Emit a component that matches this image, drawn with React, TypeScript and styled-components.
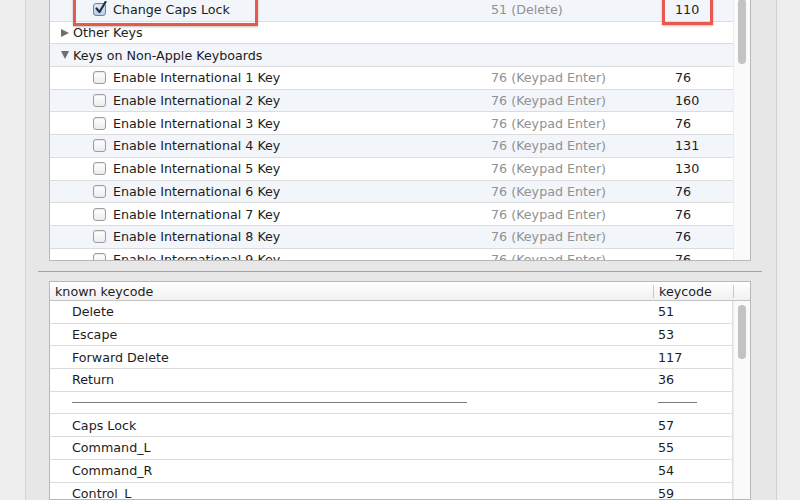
import React from 'react'
import styled, { createGlobalStyle } from 'styled-components'

const GlobalStyle = createGlobalStyle`
  html, body {
    margin: 0;
    padding: 0;
    background: #ececec;
  }
  body {
    font-family: "DejaVu Sans", "Liberation Sans", sans-serif;
    font-size: 12.7px;
    color: #1c1c1c;
  }
`

const ROW_H = 22.7

const Page = styled.div`
  width: 800px;
  height: 500px;
  overflow: hidden;
  display: flex;
  background: #ececec;
`

const Gutter = styled.div<{ side: 'left' | 'right' }>`
  flex: 0 0 ${({ side }) => (side === 'left' ? '25px' : '23px')};
  background: #eeeeee;
  ${({ side }) => (side === 'left' ? 'border-right' : 'border-left')}: 1px solid #d2d2d2;
`

const Main = styled.div`
  flex: 1;
  display: flex;
  flex-direction: column;
  background: #e7e7e7;
  padding: 0 25px 0 23px;
`

const Table = styled.div<{ offset?: number }>`
  position: relative;
  display: flex;
  background: #ffffff;
  border: 1px solid #b8b8b8;
  margin-top: ${({ offset }) => offset ?? 0}px;
  overflow: hidden;
`

const Rows = styled.div`
  flex: 1;
  display: flex;
  flex-direction: column;
`

const TopTable = styled(Table)`
  height: 261px;
  flex: 0 0 auto;
`

const BottomTable = styled(Table)`
  flex: 1;
  flex-direction: column;
`

const Row = styled.div<{ striped?: boolean }>`
  flex: 0 0 ${ROW_H}px;
  display: flex;
  align-items: center;
  background: ${({ striped }) => (striped ? '#f2f5fa' : '#ffffff')};
  border-bottom: 1px solid #dcdcdc;
  box-sizing: border-box;
  white-space: nowrap;
`

const NameCell = styled.div<{ indent: number }>`
  flex: 0 0 ${({ indent }) => 441 - indent}px;
  padding-left: ${({ indent }) => indent}px;
  display: flex;
  align-items: center;
  gap: 7px;
`

const DescCell = styled.div`
  flex: 0 0 184px;
  color: #919191;
`

const CodeCell = styled.div`
  flex: 1;
`

const Triangle = styled.span<{ open?: boolean }>`
  display: inline-block;
  width: 0;
  height: 0;
  margin-right: -3px;
  ${({ open }) =>
    open
      ? `border-left: 4px solid transparent;
         border-right: 4px solid transparent;
         border-top: 8px solid #6f6f6f;`
      : `border-top: 4px solid transparent;
         border-bottom: 4px solid transparent;
         border-left: 8px solid #6f6f6f;`}
`

const Box = styled.span`
  display: inline-flex;
  width: 13px;
  height: 13px;
  box-sizing: border-box;
  border: 1px solid #9c9c9c;
  border-radius: 3px;
  background: linear-gradient(#ffffff, #ececec);
  box-shadow: inset 0 1px 1px rgba(0, 0, 0, 0.08);
`

const CheckedBox = styled(Box)`
  position: relative;
  border-color: #6a85a8;
  background: linear-gradient(#e6eef9, #b9cbe4);
  svg {
    position: absolute;
    left: 1px;
    top: -3px;
  }
`

const Scroll = styled.div`
  flex: 0 0 16px;
  background: #fafafa;
  border-left: 1px solid #ececec;
  display: flex;
  justify-content: center;
`

const Thumb = styled.div<{ top: number; length: number }>`
  margin-top: ${({ top }) => top}px;
  width: 8px;
  height: ${({ length }) => length}px;
  border-radius: 4px;
  background: #c3c3c3;
`

const Highlight = styled.div<{ left: number; width: number; bottom: number }>`
  position: absolute;
  left: ${({ left }) => left}px;
  width: ${({ width }) => width}px;
  top: -10px;
  height: ${({ bottom }) => bottom + 10}px;
  box-sizing: border-box;
  border: 3px solid #e8584f;
  box-shadow: 0 1px 2px rgba(0, 0, 0, 0.25);
  pointer-events: none;
`

const Splitter = styled.div`
  flex: 0 0 20px;
  display: flex;
  align-items: center;
  margin: 0 -11px 0 -11px;
  &::after {
    content: '';
    flex: 1;
    height: 1px;
    background: #a2a2a2;
  }
`

const Header = styled.div`
  flex: 0 0 19px;
  display: flex;
  align-items: center;
  background: linear-gradient(#ffffff, #f1f1f1);
  border-bottom: 1px solid #c4c4c4;
  box-sizing: border-box;
`

const HeadCell = styled.div<{ width?: number; divider?: boolean }>`
  flex: ${({ width }) => (width ? `0 0 ${width}px` : '1')};
  height: 13px;
  line-height: 13px;
  padding-left: 5px;
  box-sizing: border-box;
  ${({ divider }) => (divider ? 'border-left: 1px solid #c8c8c8;' : '')}
`

const Body = styled.div`
  flex: 1;
  display: flex;
`

const KnownRows = styled(Rows)`
  border-right: 1px solid #e2e2e2;
`

const KnownName = styled.div`
  flex: 0 0 608px;
  padding-left: 22px;
  box-sizing: border-box;
`

const Rule = styled.span<{ width: number }>`
  display: block;
  width: ${({ width }) => width}px;
  height: 1px;
  background: #7a7a7a;
`

const Check = () => (
  <svg width="12" height="14" viewBox="0 0 12 14">
    <path d="M1.5 7.5 L4.5 11 L10.5 1" fill="none" stroke="#1f2f48" strokeWidth="2.2" strokeLinecap="round" strokeLinejoin="round" />
  </svg>
)

const intlCodes = [76, 160, 76, 131, 130, 76, 76, 76, 76]

const known: Array<[string, string] | null> = [
  ['Delete', '51'],
  ['Escape', '53'],
  ['Forward Delete', '117'],
  ['Return', '36'],
  null,
  ['Caps Lock', '57'],
  ['Command_L', '55'],
  ['Command_R', '54'],
  ['Control_L', '59'],
  ['Control_R', '62'],
]

const App = () => (
  <>
    <GlobalStyle />
    <Page>
      <Gutter side="left" />
      <Main>
        <TopTable offset={-2}>
          <Rows>
            <Row striped>
              <NameCell indent={43}>
                <CheckedBox>
                  <Check />
                </CheckedBox>
                Change Caps Lock
              </NameCell>
              <DescCell>51 (Delete)</DescCell>
              <CodeCell>110</CodeCell>
            </Row>
            <Row>
              <NameCell indent={11}>
                <Triangle />
                Other Keys
              </NameCell>
            </Row>
            <Row striped>
              <NameCell indent={11}>
                <Triangle open />
                Keys on Non-Apple Keyboards
              </NameCell>
            </Row>
            {intlCodes.map((code, i) => (
              <Row key={i} striped={i % 2 === 1}>
                <NameCell indent={43}>
                  <Box />
                  Enable International {i + 1} Key
                </NameCell>
                <DescCell>76 (Keypad Enter)</DescCell>
                <CodeCell>{code}</CodeCell>
              </Row>
            ))}
          </Rows>
          <Scroll>
            <Thumb top={0} length={65} />
          </Scroll>
          <Highlight left={23} width={185} bottom={27} />
          <Highlight left={612} width={51} bottom={26} />
        </TopTable>
        <Splitter />
        <BottomTable>
          <Header>
            <HeadCell width={603}>known keycode</HeadCell>
            <HeadCell width={80} divider>
              keycode
            </HeadCell>
            <HeadCell divider />
          </Header>
          <Body>
            <KnownRows>
              {known.map((item, i) => (
                <Row key={i}>
                  {item ? (
                    <>
                      <KnownName>{item[0]}</KnownName>
                      <CodeCell>{item[1]}</CodeCell>
                    </>
                  ) : (
                    <>
                      <KnownName>
                        <Rule width={395} />
                      </KnownName>
                      <CodeCell>
                        <Rule width={39} />
                      </CodeCell>
                    </>
                  )}
                </Row>
              ))}
            </KnownRows>
            <Scroll>
              <Thumb top={4} length={54} />
            </Scroll>
          </Body>
        </BottomTable>
      </Main>
      <Gutter side="right" />
    </Page>
  </>
)

export default App
